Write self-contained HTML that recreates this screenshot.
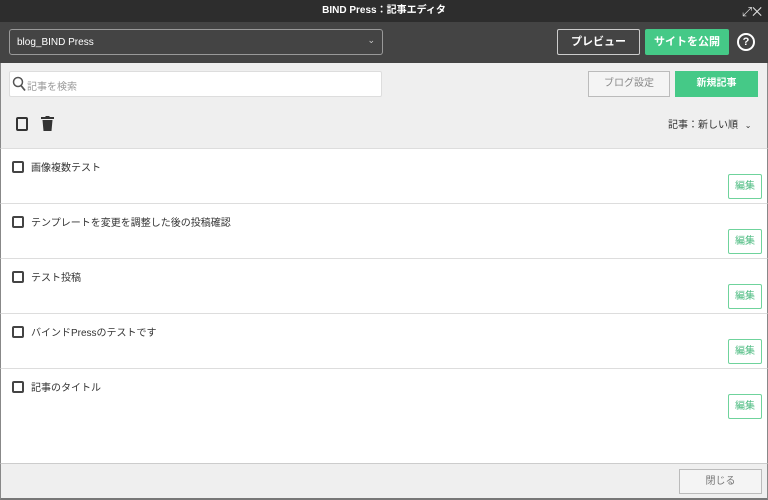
<!DOCTYPE html>
<html><head><meta charset="utf-8"><style>
*{box-sizing:border-box;margin:0;padding:0}
body{width:768px;height:500px;overflow:hidden;font-family:"Liberation Sans","Noto Sans CJK JP",sans-serif;background:#fff;position:relative;font-size:11px;color:#333}
.abs{position:absolute}
.title{left:0;top:0;width:768px;height:22px;background:#2d2d2d;color:#fff;font-weight:bold;font-size:10px;text-align:center;line-height:22px}
.bar{left:0;top:22px;width:768px;height:41px;background:#444}
.btn{position:absolute;text-align:center;font-size:11px;font-weight:bold}
.gray{left:0;top:63px;width:768px;height:85px;background:#efefef;border-left:1px solid #888;border-right:1px solid #888}
.row{position:absolute;left:0;width:768px;height:55px;border-top:1px solid #ddd;border-left:1px solid #888;border-right:1px solid #888}
.cb{position:absolute;left:11px;top:12px;width:12px;height:12px;border:2px solid #444;border-radius:2px}
.rt{position:absolute;left:30px;top:10px;font-size:10px;color:#333}
.edit{position:absolute;right:5px;top:25px;width:34px;height:25px;border:1px solid #6fd39c;color:#4cbb80;font-size:10px;text-align:center;line-height:23px;border-radius:2px}
</style></head><body>
<div class="abs bar"></div>
<div class="abs title">BIND Press：記事エディタ</div>
<div class="abs" style="right:6px;top:5px;color:#ddd;font-size:13px;line-height:14px">⤢✕</div>
<div class="abs" style="left:9px;top:29px;width:374px;height:26px;border:1px solid #999;border-radius:3px;color:#fff;font-size:10px;line-height:26px;padding-left:7px">blog_BIND Press<span style="position:absolute;right:7px;top:-3px;font-size:9px;color:#ccc">⌄</span></div>
<div class="btn" style="left:557px;top:29px;width:83px;height:26px;border:1px solid #ccc;border-radius:2px;color:#fff;line-height:24px">プレビュー</div>
<div class="btn" style="left:645px;top:29px;width:84px;height:26px;background:#45c987;border-radius:2px;color:#fff;line-height:26px">サイトを公開</div>
<div class="abs" style="left:737px;top:33px;width:18px;height:18px;border:2px solid #fff;border-radius:50%;color:#fff;font-size:11px;font-weight:bold;text-align:center;line-height:14px;background:#444">?</div>
<div class="abs gray"></div>
<div class="abs" style="left:9px;top:71px;width:373px;height:26px;background:#fff;border:1px solid #ddd;border-radius:2px"></div>
<svg class="abs" style="left:12px;top:76px" width="14" height="16"><circle cx="6" cy="6" r="4.5" fill="none" stroke="#555" stroke-width="1.5"/><line x1="9" y1="9.5" x2="13" y2="14.5" stroke="#555" stroke-width="1.8"/></svg>
<div class="abs" style="left:27px;top:78px;font-size:10px;color:#999">記事を検索</div>
<div class="btn" style="left:588px;top:71px;width:82px;height:26px;border:1px solid #bbb;background:#f4f4f4;color:#888;font-weight:normal;font-size:10px;line-height:24px">ブログ設定</div>
<div class="btn" style="left:675px;top:71px;width:83px;height:26px;background:#45c987;color:#fff;line-height:26px;font-size:10px">新規記事</div>
<div class="abs" style="left:16px;top:117px;width:12px;height:14px;border:2px solid #333;border-radius:2px"></div>
<svg class="abs" style="left:41px;top:116px" width="13" height="15"><rect x="0" y="1" width="13" height="2" fill="#333"/><rect x="4.5" y="0" width="4" height="2" fill="#333"/><path d="M1.5 4 H11.5 L10.5 15 H2.5 Z" fill="#333"/></svg>
<div class="abs" style="left:668px;top:116px;font-size:10px;color:#333">記事：新しい順 <span style="margin-left:4px;font-size:8px">⌄</span></div>
<div class="row" style="top:148px"><div class="cb"></div><div class="rt">画像複数テスト</div><div class="edit">編集</div></div>
<div class="row" style="top:203px"><div class="cb"></div><div class="rt">テンプレートを変更を調整した後の投稿確認</div><div class="edit">編集</div></div>
<div class="row" style="top:258px"><div class="cb"></div><div class="rt">テスト投稿</div><div class="edit">編集</div></div>
<div class="row" style="top:313px"><div class="cb"></div><div class="rt">バインドPressのテストです</div><div class="edit">編集</div></div>
<div class="row" style="top:368px;height:96px"><div class="cb"></div><div class="rt">記事のタイトル</div><div class="edit">編集</div></div>
<div class="abs" style="left:0;top:463px;width:768px;height:37px;background:#efefef;border-top:1px solid #ccc;border-left:1px solid #888;border-right:1px solid #888;border-bottom:2px solid #777"></div>
<div class="btn" style="left:679px;top:469px;width:83px;height:25px;border:1px solid #bbb;background:#f4f4f4;color:#777;font-weight:normal;font-size:10px;line-height:23px">閉じる</div>
</body></html>
